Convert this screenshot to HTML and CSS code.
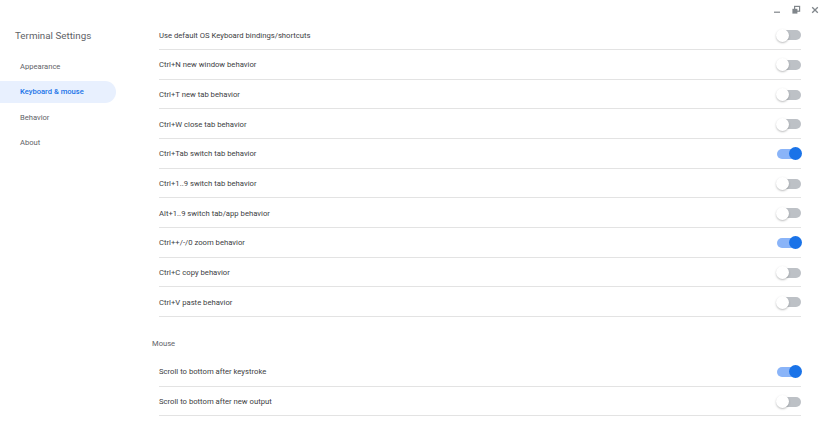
FILE: index.html
```html
<!DOCTYPE html>
<html lang="en">
<head>
    <meta charset="UTF-8">
    <meta name="viewport" content="width=device-width, initial-scale=1.0">
    <title>Terminal Settings</title>
    <link rel="stylesheet" href="styles.css">
</head>
<body>
    <!-- Window frame controls -->
    <div class="titlebar">
        <button class="win-btn" title="Minimize">
            <svg width="10" height="10" viewBox="0 0 10 10"><rect x="2" y="6.6" width="6" height="1.2" fill="#80868b"/></svg>
        </button>
        <button class="win-btn" title="Restore">
            <svg width="10" height="10" viewBox="0 0 10 10">
                <rect x="3.6" y="1.4" width="5" height="4.8" fill="none" stroke="#80868b" stroke-width="1.2"/>
                <rect x="1.4" y="3.8" width="5" height="4.8" fill="#80868b"/>
            </svg>
        </button>
        <button class="win-btn" title="Close">
            <svg width="10" height="10" viewBox="0 0 10 10"><path d="M2.2 2.2 L7.8 7.8 M7.8 2.2 L2.2 7.8" stroke="#80868b" stroke-width="1.3"/></svg>
        </button>
    </div>

    <div class="layout">
        <!-- Sidebar navigation -->
        <nav class="sidebar">
            <h1 class="app-title">Terminal Settings</h1>
            <ul class="nav">
                <li class="nav-item">Appearance</li>
                <li class="nav-item active">Keyboard &amp; mouse</li>
                <li class="nav-item">Behavior</li>
                <li class="nav-item">About</li>
            </ul>
        </nav>

        <!-- Settings list -->
        <main class="content">
            <section class="group">
                <div class="row"><span>Use default OS Keyboard bindings/shortcuts</span><span class="toggle"></span></div>
                <div class="row"><span>Ctrl+N new window behavior</span><span class="toggle"></span></div>
                <div class="row"><span>Ctrl+T new tab behavior</span><span class="toggle"></span></div>
                <div class="row"><span>Ctrl+W close tab behavior</span><span class="toggle"></span></div>
                <div class="row"><span>Ctrl+Tab switch tab behavior</span><span class="toggle on"></span></div>
                <div class="row"><span>Ctrl+1..9 switch tab behavior</span><span class="toggle"></span></div>
                <div class="row"><span>Alt+1..9 switch tab/app behavior</span><span class="toggle"></span></div>
                <div class="row"><span>Ctrl++/-/0 zoom behavior</span><span class="toggle on"></span></div>
                <div class="row"><span>Ctrl+C copy behavior</span><span class="toggle"></span></div>
                <div class="row"><span>Ctrl+V paste behavior</span><span class="toggle"></span></div>
            </section>

            <h2 class="group-title">Mouse</h2>
            <section class="group">
                <div class="row"><span>Scroll to bottom after keystroke</span><span class="toggle on"></span></div>
                <div class="row"><span>Scroll to bottom after new output</span><span class="toggle"></span></div>
            </section>
        </main>
    </div>
</body>
</html>
```

FILE: styles.css
```css
/* Basic Styles */
body {
    font-family: Roboto, "Noto Sans", sans-serif;
    background-color: #fff;
    color: #202124;
    margin: 0;
    padding: 0;
}

/* Title bar */
.titlebar {
    height: 20.5px;
    display: flex;
    justify-content: flex-end;
    align-items: center;
    padding-right: 5px;
    gap: 9px;
}

.win-btn {
    width: 10px;
    height: 10px;
    padding: 0;
    border: none;
    background: none;
    display: flex;
}

/* Page layout */
.layout {
    display: flex;
}

.sidebar {
    width: 152px;
    flex-shrink: 0;
}

.app-title {
    margin: 0;
    padding-left: 15px;
    font-size: 9.8px;
    font-weight: 400;
    line-height: 29.5px;
    color: #5f6368;
}

.nav {
    list-style: none;
    margin: 5.5px 0 0;
    padding: 0;
    display: flex;
    flex-direction: column;
    gap: 3.5px;
}

.nav-item {
    width: 96px;
    height: 22px;
    line-height: 22px;
    padding-left: 20px;
    font-size: 7.6px;
    color: #5f6368;
    border-radius: 0 11px 11px 0;
}

.nav-item.active {
    background-color: #e8f0fe;
    color: #1a73e8;
    font-weight: 500;
}

/* Settings rows */
.content {
    flex: 1;
    margin-right: 24px;
}

.group {
    margin-left: 7px;
}

.row {
    box-sizing: border-box;
    height: 29.67px;
    display: flex;
    align-items: center;
    justify-content: space-between;
    border-bottom: 1px solid #e3e3e3;
    font-size: 7.7px;
    color: #3c4043;
    padding-top: 1px;
}

.group-title {
    margin: 0;
    padding: 18px 0 4px;
    font-size: 7.6px;
    font-weight: 400;
    line-height: 18px;
    color: #5f6368;
}

/* Toggle switch */
.toggle {
    position: relative;
    width: 24px;
    height: 10px;
    border-radius: 5px;
    background-color: #bdc1c6;
}

.toggle::after {
    content: "";
    position: absolute;
    top: -1.5px;
    left: -1px;
    width: 13px;
    height: 13px;
    border-radius: 50%;
    background-color: #fff;
    box-shadow: 0 1px 2px rgba(60, 64, 67, 0.35);
}

.toggle.on {
    background-color: #8ab4f8;
}

.toggle.on::after {
    left: auto;
    right: -1px;
    background-color: #1a73e8;
    box-shadow: none;
}
```
